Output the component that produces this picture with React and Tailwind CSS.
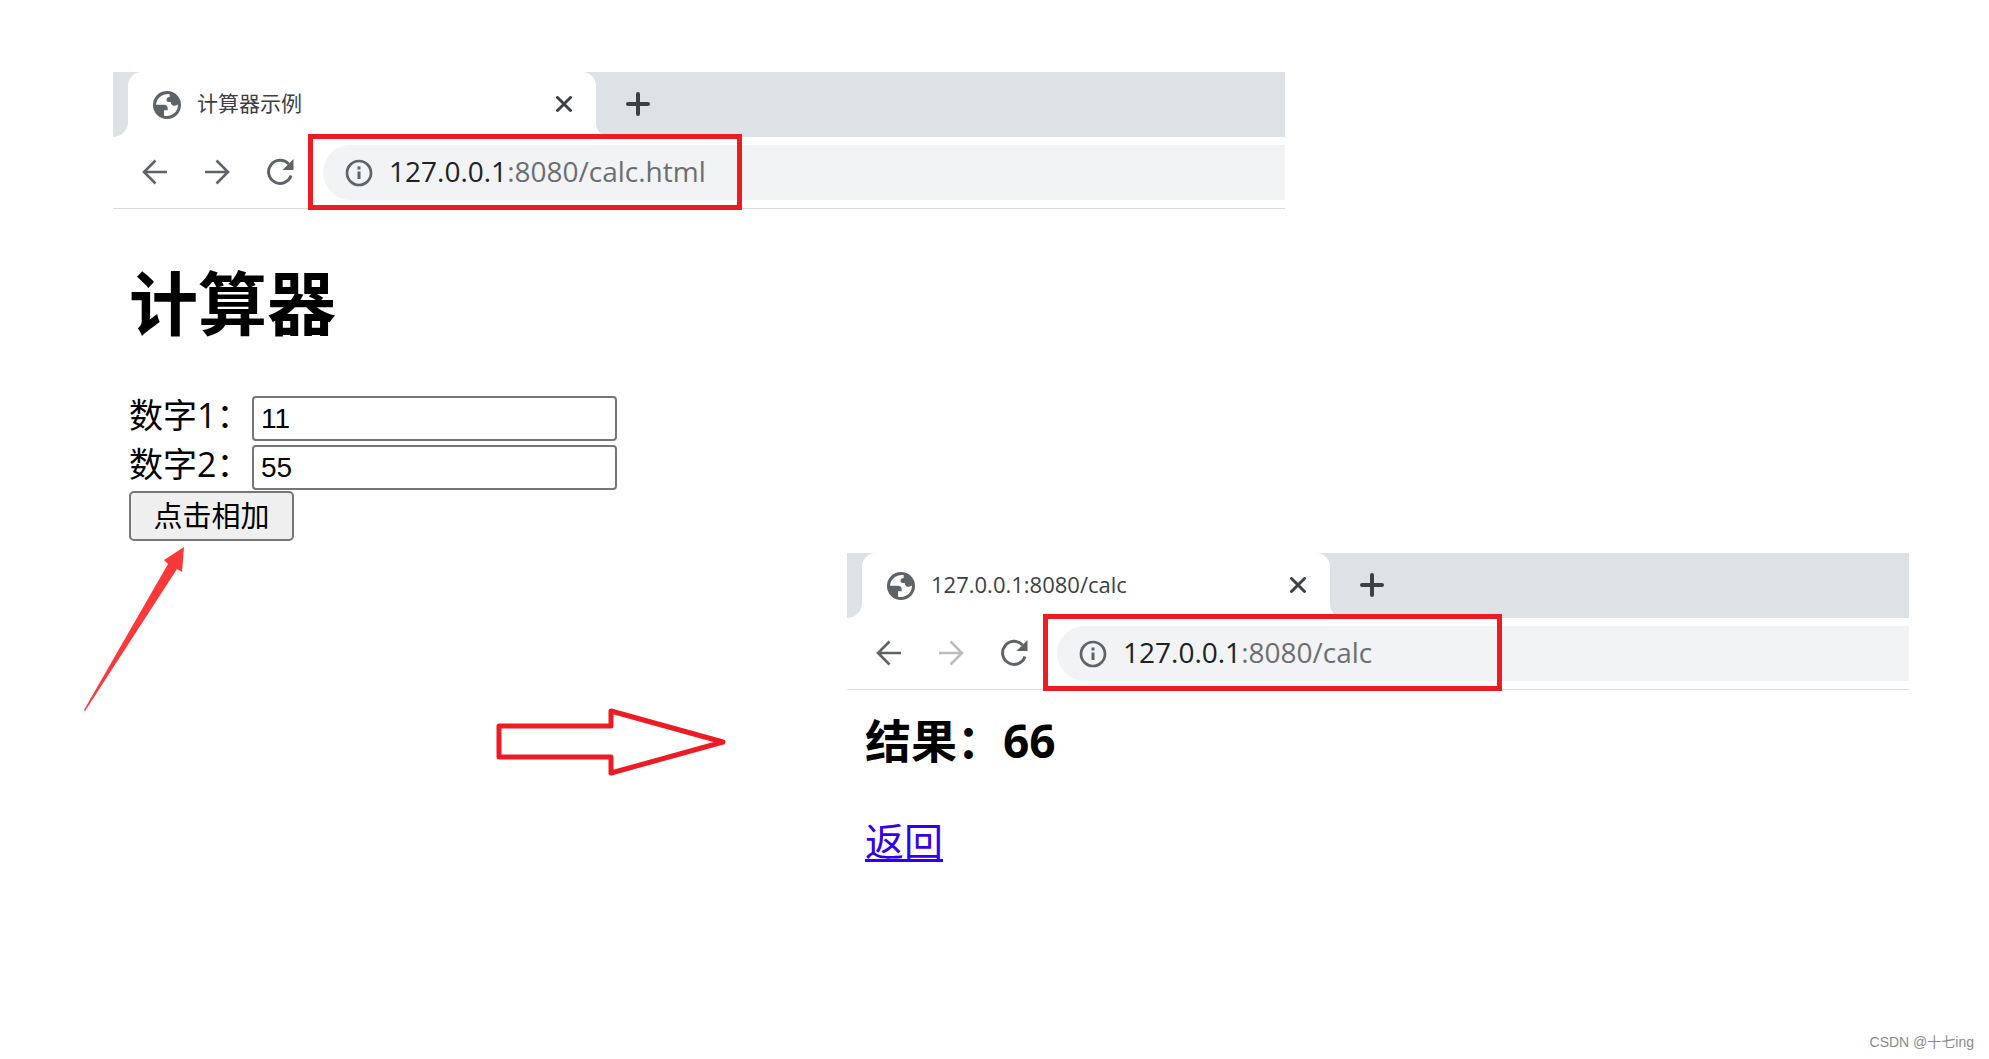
const NAV_GRAY = "#5f6368";

function GlobeIcon() {
  return (
    <svg viewBox="0 0 84 84" className="size-7 shrink-0" aria-hidden="true">
      <circle cx="42" cy="42" r="42" fill={NAV_GRAY} />
      <path
        fill="#fff"
        d="M50 9C28 7 11 20 9 41h24c7 0 11 4 11 10v7H33v16c22 5 43-10 42-34-4 4-8 5-12 4-5 0-9-3-10-11h-5c-6 0-9-3-7-8 1-5 4-7 9-7z"
      />
    </svg>
  );
}

function ArrowIcon({ flip = false, color = NAV_GRAY }) {
  return (
    <svg viewBox="0 0 26 26" className="size-[26px]" fill="none" stroke={color} strokeWidth="2.6" aria-hidden="true">
      <path d={flip ? "M1 13h22M12.5 1.5 24 13 12.5 24.5" : "M25 13H3M13.5 1.5 2 13l11.5 11.5"} />
    </svg>
  );
}

function ReloadIcon() {
  return (
    <svg viewBox="0 0 28 28" className="size-7" aria-hidden="true">
      <path d="M25 17.5A11.5 11.5 0 1 1 22.5 6" fill="none" stroke={NAV_GRAY} strokeWidth="3" />
      <path d="M27.5 1v11h-11z" fill={NAV_GRAY} />
    </svg>
  );
}

function InfoIcon() {
  return (
    <svg viewBox="0 0 28 28" className="size-7 shrink-0" aria-hidden="true">
      <circle cx="14" cy="14" r="12" fill="none" stroke={NAV_GRAY} strokeWidth="2.7" />
      <path d="M12.5 7.5h3v3h-3zM12.5 12.5h3V20h-3z" fill={NAV_GRAY} />
    </svg>
  );
}

function CloseIcon() {
  return (
    <svg viewBox="0 0 16 16" className="size-4" fill="none" stroke="#3c4043" strokeWidth="2.9" strokeLinecap="round" aria-hidden="true">
      <path d="m1.5 1.5 13 13m0-13-13 13" />
    </svg>
  );
}

function PlusIcon() {
  return (
    <svg viewBox="0 0 24 24" className="size-6" fill="none" stroke="#3c4043" strokeWidth="4" strokeLinecap="round" aria-hidden="true">
      <path d="M12 2v20M2 12h20" />
    </svg>
  );
}

function BrowserChrome({ title, host, path, canGoForward, highlight }) {
  return (
    <header className="border-b border-[#dadce0]">
      <div className="flex h-[65px] bg-[#dee1e6]">
        <div className="w-[15px] bg-white">
          <div className="h-full rounded-br-[15px] bg-[#dee1e6]" />
        </div>
        <div className="bg-[#dee1e6]">
          <div className="flex h-full w-[468px] items-center rounded-t-[14px] bg-white pr-6 pl-[25px]">
            <GlobeIcon />
            <span className="flex-1 pb-[2px] pl-4 text-[#3c4043]">{title}</span>
            <button type="button" aria-label="Close tab" className="flex pb-px">
              <CloseIcon />
            </button>
          </div>
        </div>
        <div className="flex flex-1 bg-white">
          <div className="flex flex-1 items-center rounded-bl-[14px] bg-[#dee1e6] pb-px pl-[30px]">
            <button type="button" aria-label="New tab" className="flex">
              <PlusIcon />
            </button>
          </div>
        </div>
      </div>
      <div className="flex items-center py-2 pl-[29px]">
        <nav className="flex w-[181px] items-center gap-9 pb-[2px]">
          <button type="button" aria-label="Back">
            <ArrowIcon />
          </button>
          <button type="button" aria-label="Forward" disabled={!canGoForward}>
            <ArrowIcon flip color={canGoForward ? NAV_GRAY : "#babcbe"} />
          </button>
          <button type="button" aria-label="Reload">
            <ReloadIcon />
          </button>
        </nav>
        <div className="relative flex h-[55px] flex-1 items-center gap-4 rounded-l-full bg-[#f1f3f4] pl-[22px]">
          <InfoIcon />
          <p className="pb-1 font-['Open_Sans','Noto_Sans',sans-serif] text-[28px] leading-9 text-[#6b6e72]">
            <span className="text-[#202124]">{host}</span>
            {path}
          </p>
          <div className={`pointer-events-none absolute border-[5px] border-[#ed1c24] ${highlight}`} />
        </div>
      </div>
    </header>
  );
}

function NumberField({ id, label, value }) {
  return (
    <div className="flex h-[49px] items-end pb-px">
      <label htmlFor={id} className="w-[123px] pb-[6px] text-[34px] leading-10 whitespace-nowrap">
        {label}
      </label>
      <input
        id={id}
        type="text"
        defaultValue={value}
        className="h-[45px] w-[365px] rounded-[4px] border-2 border-[#767676] bg-white px-[7px] font-['Liberation_Sans',Arial,sans-serif] text-[28px]"
      />
    </div>
  );
}

export default function App() {
  return (
    <main className="flex min-h-screen flex-col bg-white pt-[72px] font-['Open_Sans','Noto_Sans_CJK_SC',sans-serif] text-black">
      <section className="mr-[704px] ml-[113px]">
        <BrowserChrome
          title={<span className="text-[21px]">计算器示例</span>}
          host="127.0.0.1"
          path=":8080/calc.html"
          canGoForward
          highlight="-top-[11px] -left-[15px] h-[76px] w-[434px]"
        />
        <form className="px-4 pt-[49px]" onSubmit={(e) => e.preventDefault()}>
          <h1 className="mb-[45px] text-[69px] leading-[90px] font-bold">计算器</h1>
          <NumberField id="num1" label="数字1：" value="11" />
          <NumberField id="num2" label="数字2：" value="55" />
          <div className="relative">
            <button
              type="submit"
              className="block h-[50px] w-[165px] rounded-[5px] border-2 border-[#767676] bg-[#efefef] text-[29px] leading-9"
            >
              点击相加
            </button>
            <svg viewBox="0 0 100 164" className="absolute top-[56px] -left-[45px] h-[164px] w-[100px]" aria-hidden="true">
              <path d="M100 0 98 25l-5-3L1 164l-1-1L84 17l-4-4z" fill="#fd3838" />
            </svg>
          </div>
        </form>
      </section>

      <div className="mt-3 mr-20 flex items-start">
        <svg
          viewBox="0 0 230 68"
          className="mt-[155px] mr-[121px] ml-[496px] h-[68px] w-[230px] shrink-0"
          fill="none"
          stroke="#ed1c24"
          strokeWidth="5"
          strokeLinejoin="round"
          aria-hidden="true"
        >
          <path d="M3 18h112V3l112 31-112 31V49H3z" />
        </svg>
        <section className="flex-1">
          <BrowserChrome
            title={<span className="text-[22px]">127.0.0.1:8080/calc</span>}
            host="127.0.0.1"
            path=":8080/calc"
            highlight="-top-[12px] -left-[14px] h-[77px] w-[459px]"
          />
          <div className="px-[18px] pt-5">
            <h2 className="text-[46px] leading-[60px] font-bold">结果：66</h2>
            <a href="#" className="mt-[46px] inline-block text-[39px] leading-[50px] text-[#3300ee] underline decoration-3 underline-offset-3">
              返回
            </a>
          </div>
        </section>
      </div>

      <footer className="mt-auto pr-[15px] pb-[7px] text-right font-['Liberation_Sans','Noto_Sans_CJK_SC',sans-serif] text-[14px] leading-5 text-[#8a8a8a]">
        CSDN @十七ing
      </footer>
    </main>
  );
}
